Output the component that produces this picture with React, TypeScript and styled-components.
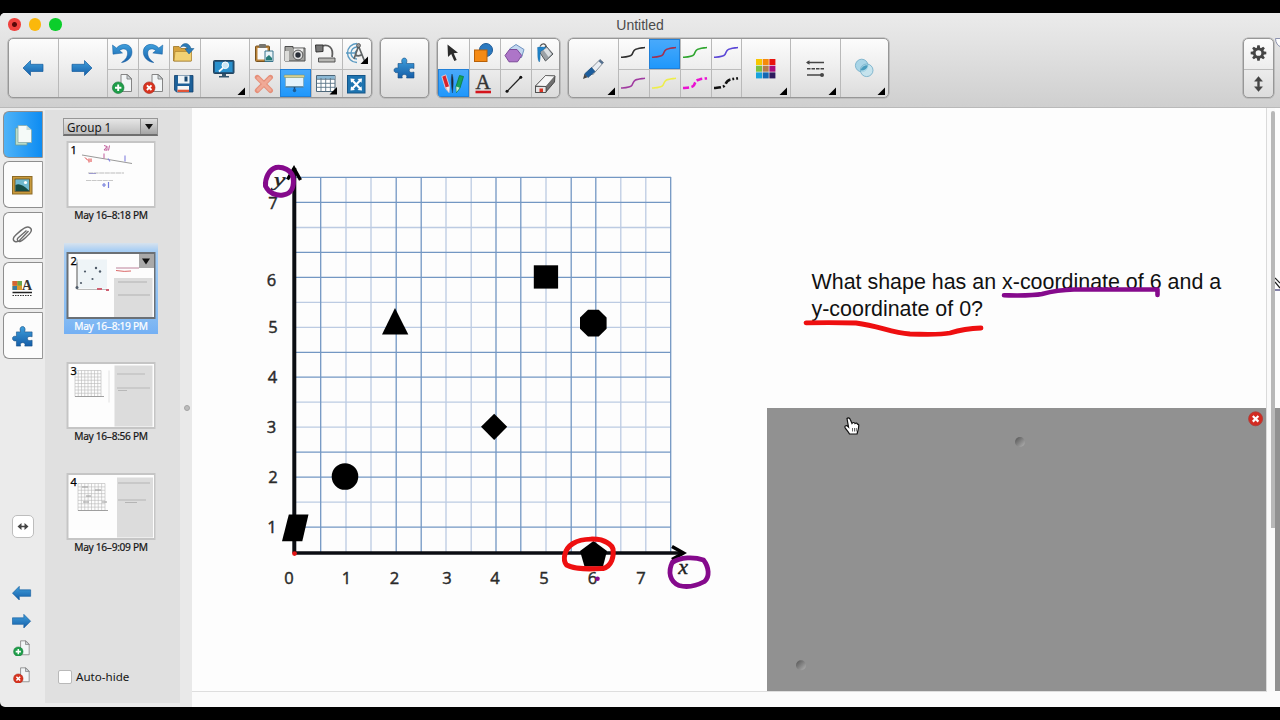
import React from "react";
import styled, { createGlobalStyle, css } from "styled-components";

const GlobalStyle = createGlobalStyle`
  * { box-sizing: border-box; }
  body { margin: 0; background: #000; font-family: "Liberation Sans", Arial, sans-serif; }
  svg { display: block; }
  button { font: inherit; color: inherit; }
`;

const Screen = styled.div`
  width: 1280px;
  height: 720px;
  padding: 13px 0;
  background: #000;
  overflow: hidden;
`;
const Window = styled.div`
  display: flex;
  flex-direction: column;
  height: 694px;
  background: #ebebeb;
  border-radius: 5px 0 0 5px;
  overflow: hidden;
`;
const Header = styled.header`
  height: 95px;
  flex: none;
  background: linear-gradient(#ebebeb, #e2e2e2 35%, #cfcfcf);
  border-bottom: 1px solid #b9b9b9;
`;
const TitleBar = styled.div`
  display: grid;
  grid-template-columns: 1fr auto 1fr;
  align-items: center;
  height: 25px;
  padding: 0 8px;
  color: #4b4b4b;
  font-size: 14px;
  line-height: 15px;
`;
const Title = styled.span`
  margin-top: -1px;
`;
const Lights = styled.div`
  display: flex;
  gap: 8px;
  margin-top: -2px;
`;
const Light = styled.i<{ $color: string }>`
  width: 12.5px;
  height: 12.5px;
  border-radius: 50%;
  background: ${(p) => p.$color};
`;
const CloseLight = styled(Light)`
  background: radial-gradient(circle, #5a0808 0 2px, #f0433f 3px);
`;
const Toolbar = styled.div`
  display: flex;
  gap: 8px;
  padding: 0 0 0 8px;
`;
const Group = styled.div<{ $cols: string; $end?: boolean }>`
  display: grid;
  grid-template-columns: ${(p) => p.$cols};
  grid-template-rows: 30px 28px;
  flex: none;
  height: 60px;
  border: 1px solid #979797;
  border-radius: 5px;
  background: linear-gradient(#fcfcfc, #eeeeee 48%, #dcdcdc);
  box-shadow: 0 0 0 0.6px #a9a9a9;
  overflow: hidden;
  ${(p) => p.$end && css`margin-left: auto;`}
`;
const Overflow = styled.div`
  width: 5px;
  height: 10px;
  margin-left: -7px;
`;
const Cell = styled.button<{ $tall?: boolean; $on?: boolean; $first?: boolean; $low?: boolean }>`
  padding: 0;
  border: 0;
  min-width: 0;
  background: ${(p) => (p.$on ? "linear-gradient(#4aaafb, #1e97fb)" : "none")};
  grid-row: ${(p) => (p.$tall ? "1 / span 2" : p.$low ? "2" : "1")};
  box-shadow: ${(p) =>
    p.$on
      ? "inset 0 0 0 1px #2180d8"
      : `inset ${p.$first ? 0 : 1}px 0 #b9b9b9, inset 0 ${p.$low ? 1 : 0}px #bcbcbc`};
`;

const Body = styled.div`
  display: flex;
  height: 599px;
`;
const Rail = styled.nav`
  display: flex;
  flex-direction: column;
  width: 45px;
  padding: 3px 2px 0 3px;
`;
const Tab = styled.button<{ $on?: boolean }>`
  flex: none;
  height: 47px;
  margin-bottom: 3.3px;
  padding: 0;
  border: 1.3px solid #8e8e8e;
  border-right: 0.5px solid #999;
  border-radius: 6px 0 0 6px;
  background: ${(p) => (p.$on ? "linear-gradient(90deg, #4fb3f8, #0d8cf2)" : "#fcfcfc")};
`;
const FlipButton = styled.button`
  width: 22px;
  height: 23px;
  margin: 153px 0 0 9px;
  padding: 0;
  border: 1px solid #bdbdbd;
  border-radius: 5px;
  background: #fff;
`;
const RailActions = styled.div`
  display: flex;
  flex-direction: column;
  gap: 11.3px;
  margin: 47px 0 0 9px;
`;

const Sorter = styled.aside`
  display: flex;
  flex-direction: column;
  width: 135px;
  height: 593px;
  margin-top: 2px;
  padding: 8px 0 0 18px;
  background: #e0e0e0;
  font-family: "Noto Sans", "Open Sans", sans-serif;
  color: #161616;
`;
const GroupSelect = styled.div`
  display: flex;
  justify-content: space-between;
  width: 95px;
  height: 18px;
  border: 1px solid #979797;
  border-bottom: 2px solid #6f6f6f;
  background: linear-gradient(#e6e6e6, #bdbdbd);
  font-size: 11.7px;
  line-height: 17px;
  padding-left: 3px;
`;
const Drop = styled.span`
  width: 17px;
  border-left: 1px solid #8c8c8c;
  background: linear-gradient(#dedede, #a5a5a5);
`;
const Pages = styled.div`
  display: flex;
  flex-direction: column;
  gap: 19.7px;
  margin: -4px 0 0 1px;
`;
const PageItem = styled.div<{ $on?: boolean }>`
  width: 94px;
  height: 91px;
  padding: 7px 1px 0;
  background: ${(p) => (p.$on ? "linear-gradient(#d6e2ee, #a6cdf4 8px, #86bcf3 80%, #74b0f4)" : "none")};
  color: ${(p) => (p.$on ? "#fff" : "#161616")};
`;
const PageLabel = styled.div`
  font-size: 10.2px;
  line-height: 13px;
  text-align: center;
  white-space: nowrap;
  letter-spacing: -0.3px;
  -webkit-text-stroke: 0.2px currentColor;
`;
const AutoHide = styled.label`
  display: flex;
  align-items: center;
  gap: 4px;
  margin: auto 0 18px -5px;
  font-size: 11.6px;
  line-height: 16px;
`;
const Box = styled.i`
  width: 14px;
  height: 14px;
  border: 1px solid #b9b9b9;
  border-radius: 2px;
  background: #fff;
`;
const Splitter = styled.div`
  display: flex;
  align-items: center;
  justify-content: center;
  width: 12px;
  background: #e9e9e9;
`;
const Grip = styled.i`
  width: 6px;
  height: 6px;
  margin-left: 1px;
  border: 1px solid #a4a4a4;
  border-radius: 50%;
  background: #bcbcbc;
`;

const Stage = styled.main`
  position: relative;
  width: 1075px;
  height: 584px;
  background: #fdfdfd;
  border-right: 1px solid #dadada;
  border-bottom: 1px solid #dedede;
`;
const Plot = styled.svg`
  position: absolute;
  left: 58px;
  top: 42px;
`;
const Question = styled.p`
  position: absolute;
  left: 619.5px;
  top: 161px;
  margin: 0;
  font-size: 21.43px;
  line-height: 27px;
  color: #111;
  white-space: nowrap;
`;
const Ink = styled.svg`
  position: absolute;
  left: 608px;
  top: 172px;
`;
const Shade = styled.div`
  position: absolute;
  left: 575px;
  top: 300px;
  width: 499px;
  height: 283px;
  background: #919191;
`;
const Tail = styled.div`
  display: flex;
  width: 13px;
  height: 584px;
  padding-left: 4px;
  background: #fafafa;
`;
const Thumb = styled.div`
  width: 4px;
  height: 417px;
  margin-top: 3px;
  border-radius: 3px 3px 0 0;
  background: #b8b8b8;
`;
const Right = styled.div`
  flex: 1;
  background: #fdfdfd;
`;
const Row = styled.div`
  display: flex;
`;

const Svg = ({ w = 30, h = 30, children }: { w?: number; h?: number; children: React.ReactNode }) => (
  <svg width={w} height={h} viewBox={`0 0 ${w} ${h}`}>{children}</svg>
);
const Corner = ({ x, y }: { x: number; y: number }) => <path d={`M${x} ${y - 7.5}V${y}H${x - 7.5}Z`} fill="#000" />;
const ArrowPath = ({ flip }: { flip?: boolean }) => (
  <g transform={flip ? "translate(48 0) scale(-1 1)" : undefined}>
    <path d="M14 29L21.500 21.500V25.300H34V32.500H21.500V36.500Z" fill="url(#blueFill)" stroke="#155d9f" strokeWidth=".7" />
  </g>
);
const UndoPath = () => (
  <path d="M9.500 9C15 3 25 4.500 25 13C25 19 20 23 14.500 23.500C19 20.500 21 17 20.500 13C20 9.500 15.500 9 12.500 11.500L15.500 14L6 15.200L5.500 6Z" fill="url(#blueFill)" stroke="#155d9f" strokeWidth=".5" />
);
const PageBadge = ({ bad }: { bad?: boolean }) => (
  <g>
    <path d="M14 5.500H20.500L24.500 9.500V22.500H14Z" fill="#f2f5f6" stroke="#858585" strokeWidth="1" />
    <path d="M20 5.500V10H24.500Z" fill="#cfd6da" stroke="#777" strokeWidth=".8" />
    <circle cx="11.200" cy="18.700" r="5.800" fill={bad ? "#d8331f" : "#1e9e49"} stroke={bad ? "#a52415" : "#147538"} strokeWidth=".6" />
    {bad ? (
      <path d="M8.900 16.400l4.600 4.600M13.500 16.400l-4.600 4.600" stroke="#fff" strokeWidth="1.900" />
    ) : (
      <path d="M11.200 15.500v6.400M8 18.700h6.400" stroke="#fff" strokeWidth="1.900" />
    )}
  </g>
);
const Puzzle = () => (
  <path
    d="M4 5.500H8.200C7 2.500 8 0 10.300 0S13.500 2.500 12.400 5.500H20V10.500C17 9.500 15.200 10.500 15.200 12.300S17 15 20 14V20H12.500C13.500 17.500 12 16.500 10.300 16.500S7.500 17.500 8.300 20H4V14.500C1.500 15.200 0 14 0 12.200S1.500 9.400 4 10.200Z"
    fill="url(#blueFill)" stroke="#174f83" strokeWidth=".6"
  />
);
const Squiggle = ({ color, dash, low, wide }: { color: string; dash?: string; low?: boolean; wide?: boolean }) => (
  <Svg>
    <path transform={low ? "translate(0 .7)" : undefined} d="M3 18.300C8 18 12 18 14 15.500C15.500 12 16 10.500 19.500 9.700C22 9 24 9 27 8.500" fill="none" stroke={color} strokeWidth={wide ? 2.6 : 1.6} strokeDasharray={dash} />
  </Svg>
);

const HiddenDefs = styled.svg`
  position: absolute;
`;
const Defs = () => (
  <HiddenDefs width="0" height="0">
    <defs>
      <linearGradient id="blueFill" x1="0" y1="0" x2="0" y2="1">
        <stop offset="0" stopColor="#3f9fdc" />
        <stop offset="1" stopColor="#155ea8" />
      </linearGradient>
      <linearGradient id="hole" x1="0" y1="0" x2="1" y2="1">
        <stop offset=".1" stopColor="#5c5c5c" />
        <stop offset="1" stopColor="#b4b4b4" />
      </linearGradient>
    </defs>
  </HiddenDefs>
);

const Placed = styled(Cell)<{ $col: number }>`
  grid-column: ${(p) => p.$col};
`;

const FileGroup = () => (
  <Group $cols="49px 49px 31px 31px 31px 49px 31px 31px 31px 29px">
    <Cell $tall $first><Svg w={49} h={58}><ArrowPath /></Svg></Cell>
    <Cell $tall><Svg w={49} h={58}><ArrowPath flip /></Svg></Cell>
    <Cell><Svg><UndoPath /></Svg></Cell>
    <Cell><Svg><g transform="translate(30.300 0) scale(-1 1)"><UndoPath /></g></Svg></Cell>
    <Cell>
      <Svg>
        <path d="M4.500 7.500H10L12 9.500H22V22H4.500Z" fill="#d6a23c" stroke="#9b7424" strokeWidth=".8" />
        <path d="M5 22L6 12.500H22.500V22Z" fill="#f2d173" stroke="#ad8430" strokeWidth=".7" />
        <path d="M11.500 8.500C13 3.500 20 2.500 22 9.500L25 9.500L20 15L16 10L18.500 9.800C17 7 14 6.500 11.500 8.500Z" fill="#2a7bb8" stroke="#17568a" strokeWidth=".5" />
      </Svg>
    </Cell>
    <Cell $tall>
      <Svg w={49} h={58}>
        <rect x="13.500" y="21.500" width="20.500" height="13" rx="1" fill="#23567e" stroke="#23445e" />
        <rect x="15" y="23" width="17.500" height="10" fill="#2a91cd" />
        <circle cx="25.300" cy="26.300" r="3.300" fill="#c9e6f5" stroke="#fff" />
        <path d="M23 28.800L19 32.500" stroke="#fff" strokeWidth="1.800" />
        <path d="M22 35H26V37H29V38.500H19V37H22Z" fill="#35566e" />
        <Corner x={45} y={56} />
      </Svg>
    </Cell>
    <Cell>
      <Svg>
        <rect x="6.500" y="7" width="14" height="15.500" rx="1" fill="#b98238" stroke="#76521f" />
        <path d="M8.500 9H18.500V20.500H8.500Z" fill="#fafafa" />
        <rect x="10" y="5" width="7" height="4" rx="1" fill="#77756e" />
        <path d="M16 12H24V22.500H16Z" fill="#e9f3f7" stroke="#39758d" />
        <path d="M17 20.500V18.500L20 16L23 19V21.500H17Z" fill="#277c79" />
      </Svg>
    </Cell>
    <Cell>
      <Svg>
        <path d="M5 9V7.500H13V9H25V22H5Z" fill="#a4a4a1" stroke="#4e4e4e" />
        <path d="M5 12H9V22H5Z" fill="#dcdcd9" />
        <rect x="14" y="9.500" width="9" height="3" fill="#eee" />
        <circle cx="18" cy="16" r="4.900" fill="#dedede" stroke="#555" />
        <circle cx="18" cy="16" r="2.700" fill="#282e37" />
      </Svg>
    </Cell>
    <Cell>
      <Svg>
        <path d="M10 7.500C17 4.500 23 8 21 18" fill="none" stroke="#5d5d5d" strokeWidth="1.800" />
        <path d="M4.500 6H12V12.500L5 13Z" fill="#777" stroke="#333" />
        <path d="M7.500 19H24V23H7.500Z" fill="#b7b7b4" stroke="#494949" strokeWidth=".9" />
      </Svg>
    </Cell>
    <Cell>
      <Svg>
        <path d="M15 4.500A9.500 9.500 0 0 0 15 23.500M15 8A6 6 0 0 0 15 20M15 11.500A3 3 0 0 0 15 17M4 14H14" fill="none" stroke="#5c9bc2" strokeWidth="1.400" />
        <path d="M16.500 7L12 20M16.500 7L22.500 22M13.500 16Q17 18 20.500 15" fill="none" stroke="#5f6466" strokeWidth="1.700" />
        <circle cx="16.500" cy="6.500" r="2" fill="#999" stroke="#444" strokeWidth=".7" />
        <Corner x={26} y={25} />
      </Svg>
    </Cell>
    <Placed $low $col={3}><Svg><PageBadge /></Svg></Placed>
    <Placed $low $col={4}><Svg><PageBadge bad /></Svg></Placed>
    <Placed $low $col={5}>
      <Svg>
        <path d="M5.500 6.500H24V23H7.500L5.500 21Z" fill="#1c5f98" stroke="#123f69" strokeWidth=".8" />
        <rect x="9" y="6.500" width="11.500" height="8" fill="#eef3f6" />
        <rect x="8.500" y="17" width="11.500" height="6" fill="#f5f5f5" />
        <rect x="8.500" y="20.700" width="11.500" height="2.300" fill="#df5438" />
        <rect x="15.500" y="7.500" width="3" height="5" fill="#17476f" />
      </Svg>
    </Placed>
    <Placed $low $col={7}><Svg><path d="M8.300 8.300L21.500 21.500M21.500 8.300L8.300 21.500" stroke="#e58f79" strokeWidth="5" strokeLinecap="round" /><path d="M9 9L21 21M21 9L9 21" stroke="#f0a996" strokeWidth="3" strokeLinecap="round" /></Svg></Placed>
    <Placed $low $on $col={8}>
      <Svg>
        <rect x="5.500" y="8" width="18" height="9.500" fill="#e5f3fb" stroke="#7fa7b7" strokeWidth=".7" />
        <rect x="4" y="6" width="20.500" height="2.500" rx="1" fill="#d6d192" stroke="#7d8c62" strokeWidth=".5" />
        <path d="M5.500 18H23.500" stroke="#587584" />
        <path d="M14.500 18V21" stroke="#1a4d7c" strokeWidth="1.500" />
        <circle cx="14.500" cy="21.500" r="1.700" fill="#1f5c92" />
      </Svg>
    </Placed>
    <Placed $low $col={9}>
      <Svg>
        <path d="M5.500 6.500H24V22.500H5.500Z" fill="#fff" stroke="#4c6679" />
        <path d="M6 7H23.500V10H6Z" fill="#8bb8d4" />
        <path d="M5.500 10.300H24M5.500 14.300H24M5.500 18.300H24M10 9V22.500M14.700 9V22.500M19.400 9V22.500" stroke="#5b7688" strokeWidth=".9" />
        <Corner x={26} y={25.5} />
      </Svg>
    </Placed>
    <Placed $low $col={10}>
      <Svg>
        <rect x="5.500" y="6.500" width="17.500" height="17.500" fill="#1e74b0" stroke="#145689" />
        <path d="M10.500 11.500L18 19.500M18 11.500L10.500 19.500" stroke="#fff" strokeWidth="2.100" />
        <path d="M8.500 9.500l4.500.5-4 3.800ZM20 9.500l-4.500.5 4 3.800ZM8.500 21.500l4.500-.5-4-3.800ZM20 21.500l-4.500-.5 4-3.800Z" fill="#fff" />
      </Svg>
    </Placed>
  </Group>
);

const ToolGroup = () => (
  <Group $cols="31px 31px 31px 28px">
    <Cell $first><Svg><path d="M9.500 5.500L10 18L13.200 15L16.300 22L18.700 21L15.700 14.200L20 13.800Z" fill="#2b2b2b" /></Svg></Cell>
    <Cell>
      <Svg>
        <circle cx="17" cy="11" r="6.500" fill="#2a79c0" stroke="#1d5b98" />
        <rect x="5.500" y="11" width="12.500" height="11.500" fill="#f58a14" stroke="#b86108" />
      </Svg>
    </Cell>
    <Cell>
      <Svg>
        <path d="M16 5.500L24 10.500L21.500 18.500H11L9.500 10Z" fill="#c3d7f0" stroke="#6f93c0" />
        <path d="M9.500 10.500H17L21.700 16.500L17.500 22.800H9L5 16.500Z" fill="#ad75c8" stroke="#7c4a99" />
      </Svg>
    </Cell>
    <Cell>
      <Svg>
        <path d="M9 7.500C11 3.500 15 4 15.500 9" fill="none" stroke="#555" strokeWidth="1.300" />
        <path d="M15 7L22 15L14.500 22L8.500 13Z" fill="#9ba1a6" stroke="#54585b" />
        <path d="M16 9L20.500 15L17.500 18L12.500 11Z" fill="#dce0e3" />
        <path d="M6.500 8.500C9 7.500 12 8.500 15 8C13.500 10 11 11.500 9.500 12.500C8.800 15 9.800 20 8.300 23C6 20 7.200 14 6.500 8.500Z" fill="#2083c9" stroke="#15629c" strokeWidth=".4" />
      </Svg>
    </Cell>
    <Cell $low $first $on>
      <Svg>
        <path d="M3.800 7.500L7.800 5.800L11.500 17.500L11 23.500L7.500 19.500Z" fill="#d8232c" stroke="#f3dede" strokeWidth=".8" />
        <path d="M7.500 18.500L11.200 17.200L11 23.500Z" fill="#eee" />
        <path d="M14 5C15.500 9 15.500 14 14.500 24C13.200 17 12.800 9 14 5Z" fill="#20252b" stroke="#1d4a74" strokeWidth=".5" />
        <path d="M21.500 6.500L25.500 7.500L22 19L18.500 23.500L18 17.500Z" fill="#18a35a" stroke="#0a7c3c" strokeWidth=".8" />
        <path d="M18.200 17.500L21.700 18.700L18.500 23.200Z" fill="#c9ead5" />
      </Svg>
    </Cell>
    <Cell $low>
      <Svg>
        <text x="14" y="19.500" textAnchor="middle" fontFamily="Liberation Serif, serif" fontSize="21" fill="#333" stroke="#333" strokeWidth=".4">A</text>
        <rect x="6.500" y="21.700" width="15.500" height="2.600" fill="#d4141c" />
      </Svg>
    </Cell>
    <Cell $low><Svg><path d="M7 22.500L21 8" stroke="#222" strokeWidth="1.200" /><circle cx="7" cy="22.300" r="1.500" fill="#111" /><circle cx="20.800" cy="8.200" r="1.500" fill="#111" /></Svg></Cell>
    <Cell $low>
      <Svg>
        <path d="M4.500 17L14.500 6.500L24 7L23.500 13L14.500 23.500H4.500Z" fill="#707070" stroke="#333" strokeWidth=".8" />
        <path d="M4.500 17L14.500 6.500L24 7L15 17.500Z" fill="#f6f6f6" stroke="#555" strokeWidth=".7" />
        <path d="M4.500 17.500H15V23.500H4.500Z" fill="#e6e6e6" stroke="#333" strokeWidth=".7" />
        <rect x="8.500" y="19.500" width="3.500" height="3.500" fill="#d93322" />
      </Svg>
    </Cell>
  </Group>
);

const swatches = ["#f7c600", "#f58b0a", "#e9130e", "#7bc142", "#b57b4a", "#a80d7d", "#17a3dc", "#1467b3", "#2e1a5e"];
const PenGroup = () => (
  <Group $cols="49px 31px 31px 31px 30px 49px 50px 48px">
    <Cell $tall $first>
      <Svg w={49} h={58}>
        <path d="M31 20.500L34.500 23.500L23.500 36L19.500 32Z" fill="#e9edf2" stroke="#6f7782" strokeWidth=".8" />
        <path d="M31 20.500L34.500 23.500L33 25.300L29.500 22.200Z" fill="#54708f" />
        <path d="M22.500 28.500L26 32.500L19 38.500L15.500 35Z" fill="#1b5d9d" stroke="#174775" strokeWidth=".7" />
        <path d="M15.500 35L18.500 38.300L14 40Z" fill="#444" />
        <Corner x={46} y={56} />
      </Svg>
    </Cell>
    <Cell><Squiggle color="#2f2f2f" /></Cell>
    <Cell $on><Squiggle color="#a32f4e" /></Cell>
    <Cell><Squiggle color="#2ea52e" /></Cell>
    <Cell><Squiggle color="#5a46d6" /></Cell>
    <Cell $tall>
      <Svg w={49} h={58}>
        {swatches.map((c, i) => (
          <rect key={c} x={15 + (i % 3) * 6.7} y={20 + Math.floor(i / 3) * 6.7} width="6" height="6" fill={c} />
        ))}
        <Corner x={46} y={56} />
      </Svg>
    </Cell>
    <Cell $tall>
      <Svg w={50} h={58}>
        <g stroke="#454545" strokeWidth="1.400" fill="none">
          <path d="M17 23.500H34" />
          <path d="M17 29.800H34" strokeDasharray="3.500 1" />
          <path d="M17 36H31" />
        </g>
        <path d="M19.500 21.300V25.700L16 23.500Z" fill="#454545" />
        <circle cx="32" cy="36" r="2" fill="#454545" />
        <Corner x={46} y={56} />
      </Svg>
    </Cell>
    <Cell $tall>
      <Svg w={48} h={58}>
        <circle cx="21.700" cy="26.500" r="6.300" fill="#a9d5e7" stroke="#6fabc7" strokeWidth=".8" />
        <circle cx="26.700" cy="31.300" r="6.300" fill="#b9e0ee" fillOpacity=".75" stroke="#6fabc7" strokeWidth=".8" />
        <path d="M20.500 31.300A6.300 6.300 0 0 1 27.900 26.500A6.300 6.300 0 0 1 20.500 31.300Z" fill="#4a9cbd" />
        <Corner x={45} y={56} />
      </Svg>
    </Cell>
    <Placed $low $col={2}><Squiggle low color="#a03ba0" /></Placed>
    <Placed $low $col={3}><Squiggle low color="#eeee4a" /></Placed>
    <Placed $low $col={4}><Squiggle low wide color="#ea12d2" dash="6 2.500" /></Placed>
    <Placed $low $col={5}><Squiggle low wide color="#111" dash="7 2 2 2" /></Placed>
  </Group>
);

const SettingsGroup = () => (
  <Group $cols="29px" $end>
    <Cell $first>
      <Svg>
        <g transform="translate(14.500 14)">
          {[0, 45, 90, 135, 180, 225, 270, 315].map((a) => (
            <path key={a} d="M-1.800 -4.500L-1.200 -7.800H1.200L1.800 -4.500Z" fill="#444" transform={`rotate(${a})`} />
          ))}
          <circle r="4.200" fill="none" stroke="#444" strokeWidth="2.700" />
        </g>
      </Svg>
    </Cell>
    <Cell $low $first><Svg><path d="M14.500 7.500L18.500 12.300H15.500V17.700H18.500L14.500 22.500L10.500 17.700H13.500V12.300H10.500Z" fill="#444" stroke="#444" strokeWidth=".4" /></Svg></Cell>
  </Group>
);

const GridThumb = ({ x, y, w, h }: { x: number; y: number; w: number; h: number }) => (
  <g stroke="#b9b9b9" strokeWidth=".6" fill="none">
    {Array.from({ length: 9 }, (_, i) => (
      <path key={i} d={`M${x + (i * w) / 8} ${y}v${h}M${x} ${y + (i * h) / 8}h${w}`} />
    ))}
    <path d={`M${x} ${y + h}h${w + 3}`} stroke="#999" strokeWidth=".9" />
  </g>
);
const ThumbFrame = ({ n, on, children }: { n: number; on?: boolean; children: React.ReactNode }) => (
  <svg width="92" height="70" viewBox="0 -.5 92 70">
    <rect x="1.500" y="1.500" width="89" height="67" fill={on ? "#6b7075" : "#c5c5c5"} />
    <rect x="3.500" y="3.500" width="85.500" height="63" fill="#fdfdfd" />
    {children}
    <text x="5.500" y="14.500" fontFamily="Noto Sans, sans-serif" fontSize="11" fill="#000" stroke="#000" strokeWidth=".25">{n}</text>
  </svg>
);

const darkX = [320.7, 396.2, 421.2, 496, 520.8, 571.2, 595.8, 670.7];
const lightX = [346, 371, 446, 471.2, 546, 620.8, 645.8];
const darkY = [177.4, 202.4, 252.4, 277.4, 352.3, 377.1, 452.1, 477.1, 527.2];
const lightY = [227.5, 302.4, 327.4, 402.1, 427.2, 502.1];
const yLabels: [string, number, number][] = [["7", 273, 209], ["6", 271.5, 286], ["5", 273, 333], ["4", 272.5, 383], ["3", 271.5, 433], ["2", 273, 483], ["1", 272, 533]];
const xLabels: [string, number][] = [["0", 289], ["1", 346.5], ["2", 394.5], ["3", 447], ["4", 495], ["5", 544], ["6", 592.5], ["7", 641]];

const CoordinatePlane = () => (
  <Plot width="480" height="460" viewBox="250 150 480 460">
    <g fill="none">
      <path stroke="#bccbe2" strokeWidth="1.300" d={lightX.map((x) => `M${x} 178V552`).join("") + lightY.map((y) => `M296 ${y}H671`).join("")} />
      <path stroke="#7397c3" strokeWidth="1.300" d={darkX.map((x) => `M${x} 177V552`).join("") + darkY.map((y) => `M296 ${y}H671`).join("")} />
      <path stroke="#0b0d12" strokeWidth="4" d="M294.300 168V553" />
      <path stroke="#0b0d12" strokeWidth="3.500" d="M293 553H682" />
      <path stroke="#000" strokeWidth="3.400" d="M287.500 179.500L294 168.500L300.500 180M672 546.500L683.500 553L672 559.500" />
    </g>
    <g>
      <path d="M395 308L408.300 334.500H382Z" />
      <rect x="533.800" y="265.300" width="24.300" height="23.300" />
      <path d="M588 309.700H598.700L606.600 317.500V328.700L598.700 336.500H588L580 328.700V317.500Z" />
      <path d="M494.200 413.800L507.200 426.800L494.200 440L481 426.800Z" />
      <circle cx="345" cy="476.500" r="13.300" />
      <path d="M288.800 514.500H308.500L302.300 541.200H282Z" />
      <path d="M593.500 541L607 551L603 566.500H584.500L580 551Z" />
    </g>
    <g fontFamily="Open Sans, Noto Sans, sans-serif" fontSize="16.500" fill="#2a2a2a" stroke="#2a2a2a" strokeWidth=".45" textAnchor="middle">
      {yLabels.map(([t, x, y]) => <text key={t} x={x} y={y}>{t}</text>)}
      {xLabels.map(([t, x]) => <text key={t} x={x} y="584">{t}</text>)}
    </g>
    <g fontFamily="Liberation Serif, serif" fontStyle="italic" fill="#222" stroke="#222" strokeWidth=".4" textAnchor="middle">
      <text transform="translate(279 185.500) skewX(-6) scale(1.350 1)" fontSize="19">y</text>
      <text transform="translate(683 574) scale(1.100 1)" fontSize="20">x</text>
    </g>
    <circle cx="294.500" cy="553.600" r="2.400" fill="#e21414" />
    <g fill="none" strokeLinecap="round" strokeLinejoin="round">
      <path stroke="#850a8c" strokeWidth="5" d="M265.500 186C265 178 269 169.500 276 167.500C283 166.500 291 170 293 177C294.500 186 292 194 283 195C276 196 269 193 266 187" />
      <path stroke="#850a8c" strokeWidth="4.800" d="M672 563C680 556.500 695 557 703.500 560C709 567 710 577 704.500 581.500C696 586 688 588 679 585.500C670 582 667.500 572 672.500 562" />
      <path stroke="#ee0f10" strokeWidth="5" d="M608 543C600 537.500 582 538 573 543.500C564 549 562.500 560 566.500 565C576 570 592 569 603 568.500C612 566 614 556 613 549C611.500 544 607 542.500 601 540" />
    </g>
    <circle cx="597.500" cy="578.700" r="2.300" fill="#850a8c" />
  </Plot>
);

const Cover = () => (
  <Shade>
    <svg width="499" height="283" viewBox="767 408 499 283">
      <circle cx="1020" cy="442" r="5" fill="url(#hole)" />
      <circle cx="801" cy="665.300" r="5" fill="url(#hole)" />
      <circle cx="1255.600" cy="418.800" r="7" fill="#d32b22" stroke="#ad3b36" strokeWidth=".8" />
      <path d="M1252.800 416L1258.400 421.600M1258.400 416L1252.800 421.600" stroke="#fff" strokeWidth="2.200" />
      <path d="M847 418.500C848.500 417 850 418.500 850.500 420L852 423.500C853 422 854.500 422.300 855 423.500C856 422.700 857.300 423 857.500 424.200C858.500 424 859 425 858.700 426C858.700 429 858 431 857 434H849.500C848 431 846 429.500 845 427.500C844.500 425.500 846.500 425 848.500 427Z" fill="#fff" stroke="#111" strokeWidth="1.200" />
      <path d="M852.500 428V431.500M854.500 428V431.500M856.300 428V431.500" stroke="#222" strokeWidth=".7" />
    </svg>
  </Shade>
);

const WorkArea = styled.div`
  flex: 1;
  background: #fbfbfb;
`;
const Workspace = () => (
  <WorkArea>
    <Row>
      <Stage>
        <CoordinatePlane />
        <Question>What shape has an x-coordinate of 6 and a<br />y-coordinate of 0?</Question>
        <Ink width="370" height="60" viewBox="800 280 370 60">
          <g fill="none" strokeLinecap="round" strokeLinejoin="round">
            <path stroke="#850a8c" strokeWidth="4.600" d="M1004 295.300C1018 295.500 1032 296 1042 294C1053 291 1062 289.700 1074 289.500H1157.500V295" />
            <path stroke="#ee0f10" strokeWidth="4.800" d="M806 322.800C825 322.500 840 322.500 856 323C880 326 890 332.500 910 334C925 334.500 940 335 950 333C960 330 968 328.500 981 328" />
          </g>
        </Ink>
        <Cover />
      </Stage>
      <Tail>
        <Thumb />
        <Right>
          <Svg w={5} h={584}>
            <path d="M0 170L5 175M0 174L5 180" stroke="#222" strokeWidth="1.200" />
            <path d="M0 182H5" stroke="#8583a8" strokeWidth="2" />
            <rect x="0" y="300" width="5" height="283" fill="#919191" />
          </Svg>
        </Right>
      </Tail>
    </Row>
  </WorkArea>
);

export default function App() {
  return (
    <Screen>
      <GlobalStyle />
      <Defs />
      <Window>
        <Header>
          <TitleBar>
            <Lights><CloseLight $color="#f0433f" /><Light $color="#fbb80b" /><Light $color="#0bce2b" /></Lights>
            <Title>Untitled</Title>
            <span />
          </TitleBar>
          <Toolbar>
            <FileGroup />
            <Group $cols="47px">
              <Cell $tall $first><Svg w={47} h={58}><g transform="translate(13 19)"><Puzzle /></g></Svg></Cell>
            </Group>
            <ToolGroup />
            <PenGroup />
            <SettingsGroup />
            <Overflow>
              <Svg w={5} h={10}><path d="M0.500 0.500H6V9C3 8 .5 5 .5 .5Z" fill="#fdfdfd" stroke="#8c92ae" /></Svg>
            </Overflow>
          </Toolbar>
        </Header>
        <Body>
          <Rail>
            <Tab $on>
              <Svg w={39} h={44}>
                <path d="M11.500 15H19L23 19V32H11.500Z" fill="#b9dcc9" stroke="#6f9d9a" strokeWidth=".8" />
                <path d="M14 12.500H22.500L27.500 17V29.500H14Z" fill="#f5faf8" stroke="#89aba9" strokeWidth=".8" />
                <path d="M22.500 12.500V17H27.500Z" fill="#c6dad6" />
              </Svg>
            </Tab>
            <Tab>
              <Svg w={39} h={44}>
                <rect x="8.500" y="13.500" width="19.500" height="17.500" fill="#c89a3c" stroke="#8c6a26" />
                <rect x="11" y="16" width="14.500" height="12.500" fill="#71b9cf" stroke="#6a5221" strokeWidth=".8" />
                <path d="M11.500 22C15 20 19 22 25 27.500V28H11.500Z" fill="#164c45" />
                <circle cx="21.500" cy="19.500" r="1.600" fill="#fff" />
              </Svg>
            </Tab>
            <Tab>
              <Svg w={39} h={44}>
                <path d="M24.500 18L15.500 27.500C12.500 30 8.500 28.500 9.500 25C10 23 19 15.500 21.500 14.500C25 13 28.500 15.500 27 18.500C25.500 21.500 18 28 16 28.500C13.500 29 12.500 26.500 14 25L22.500 17.500" fill="none" stroke="#6e6e6e" strokeWidth="1.400" />
              </Svg>
            </Tab>
            <Tab>
              <Svg w={39} h={44}>
                <path d="M8.500 18H18V27H8.500Z" fill="#d99b30" />
                <path d="M8.500 18H13V22.500H8.500Z" fill="#d66335" /><path d="M13.500 18H18V22.500H13.500Z" fill="#6aa64d" />
                <path d="M8.500 23H13V27H8.500Z" fill="#397ca1" />
                <text x="23" y="27" textAnchor="middle" fontFamily="Liberation Serif, serif" fontWeight="700" fontSize="14" fill="#333">A</text>
                <path d="M8.500 29.500H28" stroke="#222" strokeWidth="1.500" /><path d="M8.500 32.500H28" stroke="#333" strokeWidth="1.200" strokeDasharray="1.500 1" />
              </Svg>
            </Tab>
            <Tab><Svg w={39} h={44}><g transform="translate(8.500 12.500) scale(.98)"><Puzzle /></g></Svg></Tab>
            <FlipButton><Svg w={20} h={21}><path d="M4.500 10.500L8.500 7V14ZM15.500 10.500L11.500 7V14Z" fill="#444" /><path d="M7 10.500H13" stroke="#444" strokeWidth="1.600" /></Svg></FlipButton>
            <RailActions>
              <svg width="20" height="16" viewBox="13.500 20 22 17.600"><ArrowPath /></svg>
              <svg width="20" height="16" viewBox="13.500 20 22 17.600"><ArrowPath flip /></svg>
              <svg width="18" height="16" viewBox="3.500 4.500 22 19.500"><PageBadge /></svg>
              <svg width="18" height="16" viewBox="3.500 4.500 22 19.500"><PageBadge bad /></svg>
            </RailActions>
          </Rail>
          <Sorter>
            <GroupSelect>
              <span>Group 1</span>
              <Drop><Svg w={16} h={15}><path d="M4 5H12L8 10.500Z" fill="#111" /></Svg></Drop>
            </GroupSelect>
            <Pages>
              <PageItem>
                <ThumbFrame n={1}>
                  <path d="M17 15.500L67 24" stroke="#999" strokeWidth="1" />
                  <path d="M39 19V14M42 7V11M39 6l3 1-3 3.500h3M43.500 11l1-5" stroke="#c05d9b" strokeWidth="1" fill="none" />
                  <path d="M20 18l3 3M24 19v4M26 19v3.500" stroke="#df4040" strokeWidth="1" />
                  <path d="M60 22V16M43 19l2 3" stroke="#8280df" strokeWidth="1.100" />
                  <path d="M23 33.500H59" stroke="#bbb" strokeWidth="1.200" strokeDasharray="5 .6" /><path d="M24 34h7" stroke="#8d89c9" strokeWidth=".8" />
                  <path d="M21 41H48" stroke="#c8c8c8" strokeWidth="1.200" strokeDasharray="5 .6" />
                  <path d="M37 45.500h4M39 43.500v4M43.500 42.500V48.500" stroke="#7780dd" strokeWidth="1.200" />
                </ThumbFrame>
                <PageLabel>May 16–8:18 PM</PageLabel>
              </PageItem>
              <PageItem $on>
                <ThumbFrame n={2} on>
                  <rect x="12" y="9" width="30" height="29" fill="#eef4f7" />
                  <path d="M12 9V39H43" fill="none" stroke="#bbb" strokeWidth="1" /><path d="M12 12V37" stroke="#777" />
                  <g fill="#4f5b69"><circle cx="20" cy="21" r="1.100" /><circle cx="31" cy="17.500" r="1.200" /><circle cx="35" cy="21" r="1.200" /><circle cx="27.500" cy="28.500" r="1.100" /><circle cx="16" cy="32.500" r="1.100" /><circle cx="12" cy="37" r="1.500" /></g>
                  <path d="M32 38.500h5M41 39.500h3" stroke="#cf6073" strokeWidth="2" />
                  <path d="M51 17.500H74" stroke="#b5748f" strokeWidth=".9" /><path d="M51 20Q60 21.500 66 20.500" fill="none" stroke="#d65757" strokeWidth=".9" />
                  <rect x="49" y="27.500" width="38.500" height="39" fill="#dcdcdc" />
                  <path d="M53 31.500H82M53 44.500H85" stroke="#b2b2b2" strokeWidth="1.200" />
                  <rect x="74" y="3.500" width="15" height="14" fill="#a9a9a9" /><path d="M77 8H85L81 14Z" fill="#111" />
                </ThumbFrame>
                <PageLabel>May 16–8:19 PM</PageLabel>
              </PageItem>
              <PageItem>
                <ThumbFrame n={3}>
                  <GridThumb x={10} y={10} w={26} h={26} />
                  <path d="M44 10V42" stroke="#e2e2e2" />
                  <rect x="49.500" y="5" width="38" height="61" fill="#dcdcdc" />
                  <path d="M52 13.500H80M52 27.500H85M53 30H62" stroke="#b8b8b8" strokeWidth="1" />
                </ThumbFrame>
                <PageLabel>May 16–8:56 PM</PageLabel>
              </PageItem>
              <PageItem>
                <ThumbFrame n={4}>
                  <GridThumb x={13} y={12} w={27} h={27} />
                  <path d="M17 15.500h6M30 18.500h6M21 24.500h5M18 30.500h6M37 30.500h5" stroke="#999" strokeWidth="1.200" />
                  <rect x="52" y="6" width="36" height="60" fill="#dcdcdc" />
                  <path d="M53 11.500H85M53 28.500H81M60 31H72" stroke="#b4b4b4" strokeWidth="1.100" />
                </ThumbFrame>
                <PageLabel>May 16–9:09 PM</PageLabel>
              </PageItem>
            </Pages>
            <AutoHide><Box />Auto-hide</AutoHide>
          </Sorter>
          <Splitter><Grip /></Splitter>
          <Workspace />
        </Body>
      </Window>
    </Screen>
  );
}
